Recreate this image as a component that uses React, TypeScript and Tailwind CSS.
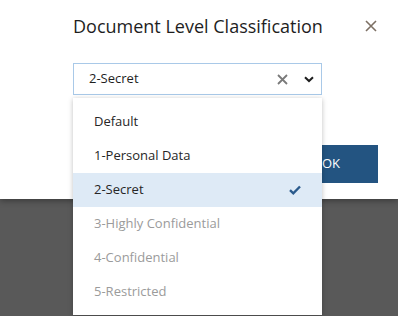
const options = [
  { label: "Default", disabled: false },
  { label: "1-Personal Data", disabled: false },
  { label: "2-Secret", disabled: false, selected: true },
  { label: "3-Highly Confidential", disabled: true },
  { label: "4-Confidential", disabled: true },
  { label: "5-Restricted", disabled: true },
];

const App = () => {
  return (
    <div
      className="relative w-[398px] h-[316px] overflow-hidden bg-[#595959]"
      style={{ fontFamily: '"Open Sans", "Segoe UI", sans-serif' }}
    >
      {/* Dialog */}
      <div className="h-[199px] bg-white shadow-[0_2px_6px_rgba(0,0,0,0.35)] flex flex-col">
        {/* Header */}
        <div className="flex items-center h-[52px] pl-[73px] pr-[20px]">
          <h2 className="flex-1 text-[18px] text-[#1e1e1e] leading-none">
            Document Level Classification
          </h2>
          <svg width="12" height="12" viewBox="0 0 12 12" className="mr-[1px]">
            <path d="M1 1 L11 11 M11 1 L1 11" stroke="#7d7064" strokeWidth="1.6" />
          </svg>
        </div>
        {/* Select */}
        <div className="mt-[11px] ml-[73px] w-[249px] h-[32px] border border-[#a9c9e8] flex items-center pl-[15px] pr-[7px]">
          <span className="flex-1 text-[13px] text-[#1e1e1e]">2-Secret</span>
          <svg width="11" height="11" viewBox="0 0 11 11" className="mr-[16px]">
            <path d="M1 1 L10 10 M10 1 L1 10" stroke="#7a7a7a" strokeWidth="1.8" />
          </svg>
          <svg width="10" height="7" viewBox="0 0 10 7">
            <path d="M1 1.2 L5 5 L9 1.2" stroke="#1e1e1e" strokeWidth="2" fill="none" />
          </svg>
        </div>
        {/* Footer */}
        <div className="flex justify-end pr-[20px] mt-[50px]">
          <button className="w-[70px] h-[38px] bg-[#235481] text-white text-[13px] text-left pl-[14px]">
            OK
          </button>
        </div>
      </div>

      {/* Dropdown menu */}
      <div className="absolute left-[73px] top-[98px] w-[249px] bg-white shadow-[0_1px_5px_rgba(0,0,0,0.25)] pt-[7px] pb-[6px]">
        {options.map((o) => (
          <div
            key={o.label}
            className={`h-[34px] flex items-center pl-[21px] pr-[21px] text-[13px] ${
              o.selected ? "bg-[#deeaf6]" : ""
            } ${o.disabled ? "text-[#9b9b9b]" : "text-[#262626]"}`}
          >
            <span className="flex-1">{o.label}</span>
            {o.selected && (
              <svg width="12" height="10" viewBox="0 0 12 10">
                <path d="M1 5.2 L4.3 8.3 L11 1.5" stroke="#2a5a8c" strokeWidth="2.4" fill="none" />
              </svg>
            )}
          </div>
        ))}
      </div>
    </div>
  );
};

export default App;
